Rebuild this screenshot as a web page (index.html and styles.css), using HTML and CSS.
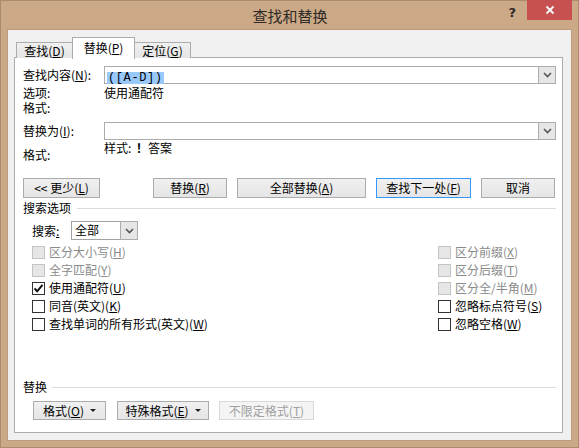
FILE: index.html
```html
<!DOCTYPE html>
<html lang="zh-CN">
<head>
<meta charset="utf-8">
<title>查找和替换</title>
<link rel="stylesheet" href="styles.css">
</head>
<body>
<div class="window">
  <div class="titlebar">
    <div></div>
    <div class="title">查找和替换</div>
    <div class="controls">
      <span class="help">?</span>
      <span class="close"><svg width="10" height="10" viewBox="0 0 10 10"><path d="M1.5 1.5 L8.5 8.5 M8.5 1.5 L1.5 8.5" stroke="#fff" stroke-width="1.8"/></svg></span>
    </div>
  </div>
  <div class="client">
    <div class="tabs">
      <div class="tab t1">查找(<u>D</u>)</div>
      <div class="tab active">替换(<u>P</u>)</div>
      <div class="tab t3">定位(<u>G</u>)</div>
    </div>
    <div class="panel">
      <div class="field-row">
        <span class="lbl">查找内容(<u>N</u>):</span>
        <div class="combo">
          <div class="combo-text"><span class="sel">([A-D])</span></div>
          <div class="combo-btn"><svg width="9" height="6" viewBox="0 0 9 6"><path d="M1 1 L4.5 4.5 L8 1" fill="none" stroke="#555" stroke-width="1.6"/></svg></div>
        </div>
      </div>
      <div class="info-row r1"><span class="lbl">选项:</span><span>使用通配符</span></div>
      <div class="info-row r2"><span class="lbl">格式:</span></div>
      <div class="field-row r4">
        <span class="lbl">替换为(<u>I</u>):</span>
        <div class="combo">
          <div class="combo-text"></div>
          <div class="combo-btn"><svg width="9" height="6" viewBox="0 0 9 6"><path d="M1 1 L4.5 4.5 L8 1" fill="none" stroke="#555" stroke-width="1.6"/></svg></div>
        </div>
      </div>
      <div class="info-row r5"><span class="lbl low">格式:</span><span>样式: <b class="bang">！</b>答案</span></div>
      <div class="btn-row">
        <button class="btn b-less">&lt;&lt; 更少(<u>L</u>)</button>
        <button class="btn b-rep">替换(<u>R</u>)</button>
        <button class="btn b-all">全部替换(<u>A</u>)</button>
        <button class="btn b-next default">查找下一处(<u>F</u>)</button>
        <button class="btn b-cancel">取消</button>
      </div>
      <div class="group-head"><span>搜索选项</span><span class="line"></span></div>
      <div class="search-row">
        <span class="slabel">搜索<u>:</u></span>
        <div class="select">
          <div class="select-text">全部</div>
          <div class="combo-btn"><svg width="9" height="6" viewBox="0 0 9 6"><path d="M1 1 L4.5 4.5 L8 1" fill="none" stroke="#555" stroke-width="1.6"/></svg></div>
        </div>
      </div>
      <div class="checks">
        <div class="chk disabled"><span class="box"></span>区分大小写(<u>H</u>)</div>
        <div class="chk disabled"><span class="box"></span>区分前缀(<u>X</u>)</div>
        <div class="chk disabled"><span class="box"></span>全字匹配(<u>Y</u>)</div>
        <div class="chk disabled"><span class="box"></span>区分后缀(<u>T</u>)</div>
        <div class="chk"><span class="box"><svg width="11" height="11" viewBox="0 0 11 11"><path d="M1.5 5.5 L4.2 8.3 L9.5 1.8" fill="none" stroke="#111" stroke-width="2"/></svg></span>使用通配符(<u>U</u>)</div>
        <div class="chk disabled"><span class="box"></span>区分全/半角(<u>M</u>)</div>
        <div class="chk"><span class="box"></span>同音(英文)(<u>K</u>)</div>
        <div class="chk"><span class="box"></span>忽略标点符号(<u>S</u>)</div>
        <div class="chk"><span class="box"></span>查找单词的所有形式(英文)(<u>W</u>)</div>
        <div class="chk"><span class="box"></span>忽略空格(<u>W</u>)</div>
      </div>
      <div class="bottom">
        <div class="group-head g2"><span>替换</span><span class="line"></span></div>
        <div class="bottom-btns">
          <button class="btn b-fmt">格式(<u>O</u>)<span class="tri"></span></button>
          <button class="btn b-spec">特殊格式(<u>E</u>)<span class="tri"></span></button>
          <button class="btn b-nolimit" disabled>不限定格式(<u>T</u>)</button>
        </div>
      </div>
    </div>
  </div>
</div>
</body>
</html>
```
FILE: styles.css
```css
* { box-sizing: border-box; }
html, body { margin: 0; padding: 0; }
body {
  width: 579px;
  height: 448px;
  font-family: "Noto Sans CJK SC", "Noto Sans", sans-serif;
  font-size: 12px;
  line-height: 14px;
  color: #000;
  overflow: hidden;
}
u { text-decoration: underline; text-underline-offset: 1px; }

.window {
  width: 579px;
  height: 448px;
  background: #cca986;
  border: 1px solid #a98c70;
  padding: 0 7px 7px 7px;
  display: flex;
  flex-direction: column;
}
.titlebar {
  height: 29px;
  display: grid;
  grid-template-columns: 1fr auto 1fr;
  margin: 0 -7px;
}
.title {
  font-size: 15px;
  line-height: 29px;
  color: #2e2a26;
  padding-left: 1px;
}
.controls {
  display: flex;
  justify-content: flex-end;
  align-items: flex-start;
}
.help {
  font-family: "DejaVu Sans", sans-serif;
  font-weight: bold;
  font-size: 13px;
  line-height: 13px;
  color: #2e2a26;
  margin-top: 5px;
  margin-right: 11px;
}
.close {
  width: 45px;
  height: 20px;
  background: #c75050;
  display: flex;
  align-items: center;
  justify-content: center;
  margin-right: 6px;
  margin-top: -1px;
}

.client {
  height: 410px;
  background: #f0f0f0;
  box-shadow: 0 0 0 1px #bb9c7e;
  padding: 7px 8px 7px 6px;
  display: flex;
  flex-direction: column;
}
.tabs {
  height: 21px;
  display: flex;
  align-items: flex-end;
  padding-left: 2px;
  position: relative;
  z-index: 1;
}
.tab {
  height: 16px;
  border: 1px solid #acacac;
  border-bottom: none;
  background: linear-gradient(#f0f0f0, #e5e5e5);
  display: flex;
  justify-content: center;
  align-items: center;
  padding-top: 1px;
}
.t1 { width: 57px; }
.t3 { width: 57px; }
.active {
  width: 63px;
  height: 22px;
  background: #fff;
  margin: 0 -1px -1px -1px;
  padding-top: 0;
  padding-bottom: 2px;
}
.panel {
  height: 376px;
  margin-top: -1px;
  background: #fff;
  border: 1px solid #acacac;
  padding: 8px 6px 12px 8px;
  display: flex;
  flex-direction: column;
}
.lbl { width: 81px; flex: none; }
.field-row {
  height: 18px;
  display: flex;
  align-items: center;
}
.combo {
  flex: 1;
  height: 18px;
  border: 1px solid #acacac;
  display: flex;
}
.combo-text {
  flex: 1;
  padding: 2px 2px 0 2px;
}
.sel {
  display: inline-block;
  background: #99c9fb;
  font-family: "Liberation Mono", monospace;
  font-size: 12px;
  line-height: 12px;
  padding: 0 1px;
  letter-spacing: 0.6px;
}
.combo-btn {
  width: 18px;
  flex: none;
  background: #e6e6e6;
  border: 1px solid #acacac;
  margin: -1px -1px -1px 0;
  display: flex;
  align-items: center;
  justify-content: center;
}
.info-row { display: flex; height: 14px; line-height: 14px; overflow: visible; }
.r1 { margin-top: 2px; }
.r2 { margin-top: 1px; }
.r4 { margin-top: 7px; }
.r5 { margin-top: 1px; height: 21px; }
.low { padding-top: 7px; }
.bang { font-weight: bold; margin-left: 2px; }

.btn-row {
  margin-top: 16px;
  height: 20px;
  display: flex;
}
.btn {
  font-family: inherit;
  font-size: 12px;
  line-height: 14px;
  color: #000;
  height: 20px;
  border: 1px solid #acacac;
  background: linear-gradient(#f0f0f0, #e5e5e5);
  padding: 0;
  margin: 0;
  display: flex;
  align-items: center;
  justify-content: center;
  border-radius: 0;
}
.default { border-color: #3399ff; }
.b-less { width: 77px; }
.b-rep { width: 74px; margin-left: 53px; }
.b-all { width: 129px; margin-left: 10px; }
.b-next { width: 95px; margin-left: 10px; }
.b-cancel { width: 74px; margin-left: 10px; }

.group-head {
  margin-top: 3px;
  height: 14px;
  display: flex;
  align-items: center;
}
.group-head .line {
  flex: 1;
  height: 1px;
  background: #dcdcdc;
  margin-left: 6px;
}
.g2 .line { margin-left: 5px; }

.search-row {
  margin-top: 6px;
  height: 19px;
  display: flex;
  align-items: center;
  padding-left: 9px;
}
.slabel { width: 39px; }
.select {
  width: 67px;
  height: 19px;
  border: 1px solid #a3a3a3;
  display: flex;
}
.select-text { flex: 1; padding: 1px 0 0 3px; }

.checks {
  margin-top: 3px;
  padding-left: 9px;
  display: grid;
  grid-template-columns: 406px auto;
  grid-auto-rows: 18px;
}
.chk {
  display: flex;
  align-items: center;
}
.box {
  width: 13px;
  height: 13px;
  border: 1px solid #333;
  background: #fff;
  margin-right: 4px;
  display: flex;
  align-items: center;
  justify-content: center;
}
.disabled { color: #8a8a8a; }
.disabled .box { border-color: #c4c4c4; background: #e6e6e6; }

.bottom { margin-top: auto; }
.bottom .group-head { margin-top: 0; }
.bottom-btns {
  margin-top: 7px;
  display: flex;
  padding-left: 10px;
}
.bottom-btns .btn { height: 19px; }
.b-fmt { width: 73px; }
.b-spec { width: 92px; margin-left: 11px; }
.b-nolimit {
  width: 95px;
  margin-left: 10px;
  border-color: #d9d9d9;
  background: #f4f4f4;
  color: #a0a0a0;
}
.tri {
  width: 0;
  height: 0;
  border-left: 3px solid transparent;
  border-right: 3px solid transparent;
  border-top: 3px solid #222;
  margin-left: 6px;
}
```
